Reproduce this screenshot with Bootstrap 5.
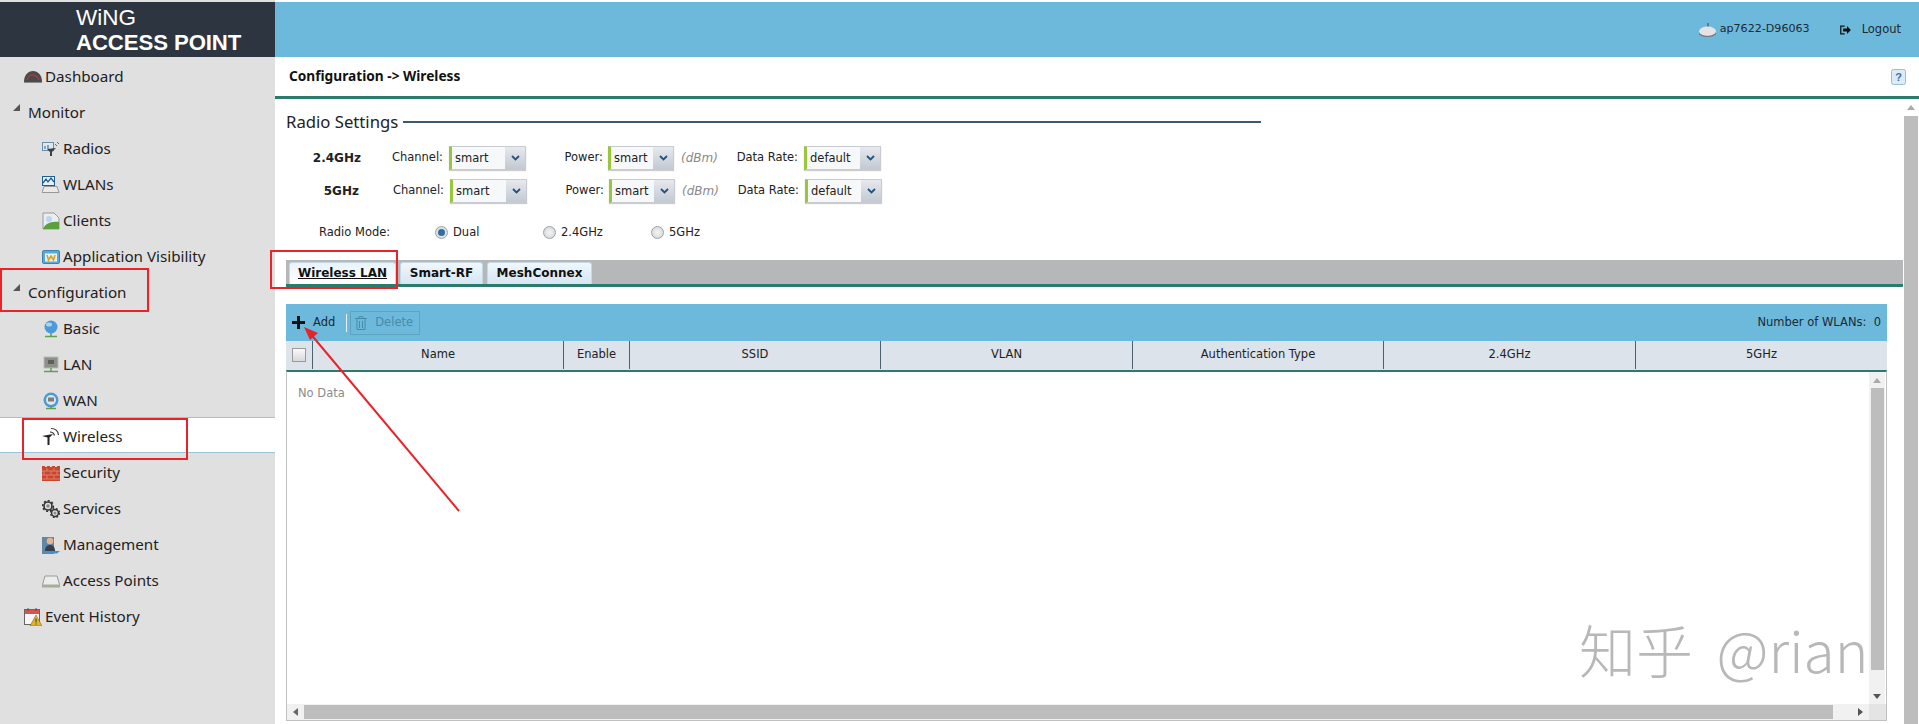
<!DOCTYPE html>
<html lang="en">
<head>
<meta charset="utf-8">
<title>WiNG Access Point</title>
<link href="https://cdn.jsdelivr.net/npm/bootstrap@5.3.0/dist/css/bootstrap.min.css" rel="stylesheet">
<style>
html,body{height:724px;overflow:hidden;background:#fff}
body{font-family:"DejaVu Sans",sans-serif;font-size:11.5px;color:#222;position:relative}
.shell{height:724px}
.side-pane{width:275px;flex:none;background:#e0e0e0;font-family:"Noto Sans",sans-serif;font-size:15.2px;color:#222}
.brand-box{height:55px;margin-top:2px;background:#2d3541;color:#fff;font-family:"Liberation Sans",sans-serif;font-size:22.5px;line-height:25px;padding:3px 0 0 76px}
.brand-box b{display:block;font-size:22.2px;letter-spacing:-.1px}
.tree-row{height:36px;display:flex;align-items:center;padding-left:24px;padding-top:3px;gap:3px}
.tree-row.sub{padding-left:42px}
.tree-row.head{padding-left:28px;position:relative}
.tree-row.head::before{content:"";position:absolute;left:13px;top:11px;border-style:solid;border-width:0 0 7px 7px;border-color:transparent transparent #555 transparent}
.tree-row.on{background:#fff;box-shadow:inset 0 1px 0 #9cc3d6,inset 0 -1px 0 #9cc3d6}
.tree-row svg{flex:none}
.main-pane{min-width:0;flex:1}
.top-strip{height:55px;margin-top:2px;background:#6cb9dc;padding-right:18px;color:#1c2a33}
.ap-name{font-size:11.1px;margin-right:2px}
.crumb-band{height:39px;padding:0 13px 0 14px;font-family:"Noto Sans",sans-serif;font-size:13.7px;font-weight:700;color:#111}
.teal-rule{height:3px;background:#2b7a6b}
.work{position:relative;height:625px;padding:0 0 0 11px}
.sect-title{height:42px;font-family:"Noto Sans",sans-serif;font-size:16.7px;color:#222;width:975px;gap:5px;padding-top:3px}
.sect-title i{display:block;flex:1;height:2px;background:#3b5a70}
.band-row{height:33px}
.band-row.second{margin-left:1px}
.band-row.second .w-band{padding-right:3px}
.w-band{width:75px;text-align:right;font-weight:700;font-size:12px}
.w-ch{width:82px;text-align:right;margin-right:6px}
.w-pw{width:77px;text-align:right;margin-right:5px}
.w-dr{width:81px;text-align:right;margin-right:6px}
.w-db{width:36px;margin-left:7px;font-style:italic;font-size:12px;color:#8a8a8a;white-space:nowrap}
.pick{height:24px;border:1px solid #c8ccd2;border-left:3px solid #9bc53d;background:#f7f8fa;display:flex;align-items:stretch;box-shadow:0 1px 1px #ccc}
.pick span{flex:1;padding-left:3px;line-height:22px}
.pick em{flex:none;width:20px;background:linear-gradient(#e6e9ee,#c3c9d2);display:flex;align-items:center;justify-content:center}
.pick.w77{width:77px}.pick.w66{width:66px}
.mode-row{height:33px;margin-top:9px;padding-left:33px}
.mode-lab{width:116px;white-space:nowrap}
.rad{width:13px;height:13px;border-radius:50%;border:1px solid #9aa3ad;background:radial-gradient(#f4f4f4,#d2d2d2);margin-right:5px;flex:none;display:flex;align-items:center;justify-content:center}
.rad.set::after{content:"";width:7px;height:7px;border-radius:50%;background:#2f6ea5}
.mode-opt{width:108px}
.tab-strip{height:24px;margin-top:11px;background:#b6b7b9;margin-right:16px;padding-left:3px;gap:4px;align-items:flex-end}
.wtab{height:22px;background:linear-gradient(#f0f7fc,#d5e6f3);border:1px solid #c4d8e6;border-bottom:0;border-radius:3px 3px 0 0;font-weight:700;font-size:12px;color:#111;text-align:center;line-height:21px}
.wtab.t1{width:107px;text-decoration:underline;background:linear-gradient(#e9f3fa,#fff)}
.wtab.t2{width:83px}.wtab.t3{width:105px}
.tab-rule{height:3px;background:#2b7a6b;margin-right:16px}
.tool-bar{height:37px;margin-top:17px;width:1601px;background:#6cb9dc;padding:0 6px 0 6px;color:#1c2a33}
.tool-sep{width:1px;height:18px;background:#e4f2f9;margin:0 3px 0 11px}
.del-btn{width:70px;height:24px;border:1px solid #5da3c2;color:#4a8aa8;display:flex;align-items:center;gap:8px;padding-left:4px;background:#6cb9dc}
.grid-head{width:1601px;height:29px;background:#dce3ea;display:grid;grid-template-columns:27px 251px 66px 251px 252px 251px 252px 251px;color:#222}
.grid-head>div{display:flex;align-items:center;justify-content:center;border-right:1px solid #4e6272;height:28px}
.grid-head>div:last-child{border-right:0}
.chk{width:14px;height:14px;border:1px solid #9a9a9a;background:linear-gradient(#fafafa,#d8d8d8)}
.grid-body{width:1601px;height:351px;border:1px solid #c0c0c0;border-top:2px solid #2b7a6b;position:relative;color:#8b8b8b;padding:13px 0 0 11px}
.sb-v,.sb-h{position:absolute;background:#f1f1f1}
.sb-v{top:0;right:1px;width:16px;bottom:16px}
.sb-h{left:0;right:1px;height:16px;bottom:0}
.sb-thumb{position:absolute;background:#bdbdbd}
.sb-v .sb-thumb{left:2px;right:1px;top:16px;bottom:34px}
.sb-h .sb-thumb{left:17px;right:52px;top:1px;bottom:1px}
.sb-tri{position:absolute;width:0;height:0;border-style:solid}
.sb-corner{position:absolute;right:0;bottom:0;width:17px;height:16px;background:#e4e4e4}
.outer-sb{position:absolute;right:1px;top:0;bottom:0;width:14px;background:#fff}
.outer-sb u{position:absolute;display:block;left:0;right:0;top:17px;bottom:0;background:#bdbdbd}
.wm-text{position:absolute;left:1579px;top:610px;white-space:nowrap;font-family:"Noto Sans CJK SC","Noto Sans",sans-serif;font-weight:300;font-size:57px;line-height:76px;word-spacing:11px;color:#b8b8b8}
.annot{position:absolute;left:0;top:0;pointer-events:none}
</style>
</head>
<body>
<div class="shell d-flex">
  <aside class="side-pane">
    <div class="brand-box">WiNG<b>ACCESS POINT</b></div>
    <div class="tree-row"><svg width="18" height="13" viewBox="0 0 18 13"><path d="M0 12C0 5 4 1 9 1s9 4 9 11z" fill="#4a4a4a"/><path d="M3 10c1-4 4-6 7-5 2 .6 4 2 5 5" fill="none" stroke="#a33c3c" stroke-width="1.4"/><path d="M0 12h18v1H0z" fill="#8c8c8c"/></svg>Dashboard</div>
    <div class="tree-row head">Monitor</div>
    <div class="tree-row sub"><svg width="18" height="16" viewBox="0 0 18 16"><rect x=".5" y="1.500" width="11" height="8" fill="#dfe8ee" stroke="#6b8da5"/><path d="M3 8V5M6 8V4" stroke="#3c78a8" stroke-width="1.200"/><path d="M5 8l9-1-4 4v4H8v-4z" fill="#3f3f3f"/><path d="M13 3l2 2M15 1l2 2" stroke="#666" fill="none"/></svg>Radios</div>
    <div class="tree-row sub"><svg width="18" height="17" viewBox="0 0 18 17"><rect x=".5" y=".5" width="12" height="9" fill="#e8f0f6" stroke="#1f5e96"/><path d="M1 7l3-4 2 3 3-4 3 4" fill="none" stroke="#1f5e96" stroke-width="1.300"/><path d="M2 10.500h13l2 6H0z" fill="#e9e9e9" stroke="#999"/></svg>WLANs</div>
    <div class="tree-row sub"><svg width="18" height="18" viewBox="0 0 18 18"><path d="M1 1h11l5 5v11H1z" fill="#e8eef3" stroke="#9a9a9a"/><circle cx="7" cy="7" r="3" fill="#bcd6ea"/><path d="M1 17c2-5 7-8 16-7v7z" fill="#5aa03c"/></svg>Clients</div>
    <div class="tree-row sub"><svg width="18" height="14" viewBox="0 0 18 14"><rect x=".5" y=".5" width="17" height="13" rx="1.500" fill="#59a9d9" stroke="#3b84b5"/><rect x="3" y="3.500" width="12" height="8" fill="#e9f3f9"/><path d="M5 5l1.500 5L9 6l2.500 4L13 5" fill="none" stroke="#d7a21f" stroke-width="1.600"/></svg>Application Visibility</div>
    <div class="tree-row head">Configuration</div>
    <div class="tree-row sub"><svg width="18" height="18" viewBox="0 0 18 18"><circle cx="9" cy="7" r="6.500" fill="#4a9bd8"/><ellipse cx="7" cy="4.500" rx="3" ry="2" fill="#aad6f2"/><path d="M9 13v3M3 16.500h12" stroke="#5f9e53" stroke-width="1.500"/></svg>Basic</div>
    <div class="tree-row sub"><svg width="18" height="18" viewBox="0 0 18 18"><rect x="2" y="1" width="14" height="11" fill="#8d9088" stroke="#bbb"/><rect x="6" y="4" width="6" height="4" fill="#5d6058"/><path d="M9 12v3M2 15.500h14" stroke="#5f9e53" stroke-width="1.500"/></svg>LAN</div>
    <div class="tree-row sub"><svg width="18" height="18" viewBox="0 0 18 18"><circle cx="9" cy="8" r="7.500" fill="#4a9bd8"/><circle cx="9" cy="8" r="5" fill="#dfe8ee"/><rect x="6" y="5.500" width="6" height="4" fill="#7d7f76"/><path d="M9 13v3M4 16.500h10" stroke="#5f9e53" stroke-width="1.500"/></svg>WAN</div>
    <div class="tree-row sub on"><svg width="18" height="19" viewBox="0 0 18 19"><path d="M0 9l11-2-3.500 3.500V18h-2v-7.500z" fill="#222"/><path d="M8 5c2.500 0 4 1.300 4.500 3.500M9 1.500c4 0 7 2.500 7.500 6.500" fill="none" stroke="#333" stroke-width="1.200"/></svg>Wireless</div>
    <div class="tree-row sub"><svg width="18" height="16" viewBox="0 0 18 16"><rect x="0" y="2" width="18" height="14" fill="#c9452f"/><path d="M0 1h3v2H0zM5 1h3v2H5zM10 1h3v2h-3zM15 1h3v2h-3z" fill="#c9452f"/><path d="M0 6h18M0 10h18M0 14h18M5 3v3M12 3v3M2 6v4M9 6v4M15 6v4M5 10v4M12 10v4" stroke="#e28f75" stroke-width=".8"/></svg>Security</div>
    <div class="tree-row sub"><svg width="18" height="18" viewBox="0 0 18 18"><circle cx="6" cy="6" r="4" fill="none" stroke="#333" stroke-width="1.600"/><circle cx="6" cy="6" r="5.300" fill="none" stroke="#333" stroke-width="1.600" stroke-dasharray="2 2"/><circle cx="6" cy="6" r="1.800" fill="#888"/><circle cx="13" cy="13" r="3.400" fill="none" stroke="#333" stroke-width="1.500"/><circle cx="13" cy="13" r="4.500" fill="none" stroke="#333" stroke-width="1.400" stroke-dasharray="1.800 1.800"/><circle cx="13" cy="13" r="1.500" fill="#888"/></svg>Services</div>
    <div class="tree-row sub"><svg width="18" height="18" viewBox="0 0 18 18"><path d="M0 1h12v17H0z" fill="#5f87a8"/><circle cx="8" cy="5" r="3.300" fill="#e8b48e"/><path d="M3 15c0-4 2-6 5-6s5 2 5 6z" fill="#3a3f4a"/><path d="M3 15h15l-3 2.500H3z" fill="#3d93d1"/></svg>Management</div>
    <div class="tree-row sub"><svg width="18" height="14" viewBox="0 0 18 14"><path d="M3 2h12l3 10H0z" fill="#ececec" stroke="#999"/><path d="M0 10.500h18v3H0z" fill="#a5ad9b"/></svg>Access Points</div>
    <div class="tree-row"><svg width="18" height="18" viewBox="0 0 18 18"><rect x=".5" y="1.500" width="15" height="15" fill="#f7f7f7" stroke="#666"/><rect x="1" y="2" width="14" height="4" fill="#d9534f"/><path d="M4 0v3M12 0v3" stroke="#555"/><path d="M12 7l6 11H6z" fill="#e2b32c" stroke="#8a6d10" stroke-width=".6"/><path d="M12 10.500v4M12 15.500v1" stroke="#333"/></svg>Event History</div>
  </aside>
  <main class="main-pane">
    <div class="top-strip d-flex align-items-center justify-content-end">
      <svg class="me-1" width="17" height="14" viewBox="0 0 17 14"><path d="M9 0v6" stroke="#444"/><ellipse cx="8.500" cy="8.500" rx="8.500" ry="5" fill="#e4e4e4"/><path d="M0 9c2 5 15 5 17 0v2c-2 4-15 4-17 0z" fill="#777"/></svg>
      <span class="ap-name">ap7622-D96063</span>
      <svg class="ms-4 me-2 ps-1" width="18" height="12" viewBox="0 0 18 12"><path d="M6 1H1v10h5" fill="none" stroke="#111" stroke-width="1.600"/><path d="M4 4h5V1l5 5-5 5V8H4z" fill="#111"/></svg>
      <span>Logout</span>
    </div>
    <div class="crumb-band d-flex align-items-center justify-content-between">
      <span>Configuration -&gt; Wireless</span>
      <svg width="15" height="16" viewBox="0 0 15 16"><rect x=".5" y=".5" width="14" height="15" rx="2" fill="#dcebf8" stroke="#9dbbd4"/><text x="7.500" y="12" text-anchor="middle" font-family="Liberation Sans,sans-serif" font-size="11" font-weight="700" fill="#3f6f9e">?</text></svg>
    </div>
    <div class="teal-rule"></div>
    <div class="work">
      <div class="sect-title d-flex align-items-center"><span>Radio Settings</span><i></i></div>
      <div class="band-row d-flex align-items-center">
        <div class="w-band">2.4GHz</div><div class="w-ch">Channel:</div>
        <div class="pick w77"><span>smart</span><em><svg width="9" height="6" viewBox="0 0 9 6"><path d="M1 1l3.500 3.500L8 1" fill="none" stroke="#24527d" stroke-width="1.800"/></svg></em></div>
        <div class="w-pw">Power:</div>
        <div class="pick w66"><span>smart</span><em><svg width="9" height="6" viewBox="0 0 9 6"><path d="M1 1l3.500 3.500L8 1" fill="none" stroke="#24527d" stroke-width="1.800"/></svg></em></div>
        <div class="w-db">(dBm)</div><div class="w-dr">Data Rate:</div>
        <div class="pick w77"><span>default</span><em><svg width="9" height="6" viewBox="0 0 9 6"><path d="M1 1l3.500 3.500L8 1" fill="none" stroke="#24527d" stroke-width="1.800"/></svg></em></div>
      </div>
      <div class="band-row second d-flex align-items-center">
        <div class="w-band">5GHz</div><div class="w-ch">Channel:</div>
        <div class="pick w77"><span>smart</span><em><svg width="9" height="6" viewBox="0 0 9 6"><path d="M1 1l3.500 3.500L8 1" fill="none" stroke="#24527d" stroke-width="1.800"/></svg></em></div>
        <div class="w-pw">Power:</div>
        <div class="pick w66"><span>smart</span><em><svg width="9" height="6" viewBox="0 0 9 6"><path d="M1 1l3.500 3.500L8 1" fill="none" stroke="#24527d" stroke-width="1.800"/></svg></em></div>
        <div class="w-db">(dBm)</div><div class="w-dr">Data Rate:</div>
        <div class="pick w77"><span>default</span><em><svg width="9" height="6" viewBox="0 0 9 6"><path d="M1 1l3.500 3.500L8 1" fill="none" stroke="#24527d" stroke-width="1.800"/></svg></em></div>
      </div>
      <div class="mode-row d-flex align-items-center">
        <div class="mode-lab">Radio Mode:</div>
        <div class="mode-opt d-flex align-items-center"><span class="rad set"></span>Dual</div>
        <div class="mode-opt d-flex align-items-center"><span class="rad"></span>2.4GHz</div>
        <div class="mode-opt d-flex align-items-center"><span class="rad"></span>5GHz</div>
      </div>
      <div class="tab-strip d-flex">
        <div class="wtab t1">Wireless LAN</div><div class="wtab t2">Smart-RF</div><div class="wtab t3">MeshConnex</div>
      </div>
      <div class="tab-rule"></div>
      <div class="tool-bar d-flex align-items-center">
        <svg class="me-2" width="13" height="13" viewBox="0 0 13 13"><path d="M5 0h3v5h5v3H8v5H5V8H0V5h5z" fill="#111"/></svg>
        <span>Add</span><span class="tool-sep"></span>
        <div class="del-btn"><svg width="12" height="14" viewBox="0 0 12 14"><path d="M0 2.500h12M4 2V.7h4V2M2 3v10.500h8V3M4.500 5v7M7.500 5v7" fill="none" stroke="#4a8aa8"/></svg>Delete</div>
        <span class="ms-auto">Number of WLANs:&nbsp; 0</span>
      </div>
      <div class="grid-head">
        <div><span class="chk"></span></div><div>Name</div><div>Enable</div><div>SSID</div><div>VLAN</div><div>Authentication Type</div><div>2.4GHz</div><div>5GHz</div>
      </div>
      <div class="grid-body">No Data
        <div class="sb-v"><div class="sb-thumb"></div><span class="sb-tri" style="left:4px;top:6px;border-width:0 4px 5px 4px;border-color:transparent transparent #aaa transparent"></span><span class="sb-tri" style="left:4px;bottom:5px;border-width:5px 4px 0 4px;border-color:#555 transparent transparent transparent"></span></div>
        <div class="sb-h"><div class="sb-thumb"></div><span class="sb-tri" style="left:6px;top:4px;border-width:4px 5px 4px 0;border-color:transparent #666 transparent transparent"></span><span class="sb-tri" style="right:22px;top:4px;border-width:4px 0 4px 5px;border-color:transparent transparent transparent #555"></span></div>
        <div class="sb-corner"></div>
      </div>
      <div class="outer-sb"><u></u><span class="sb-tri" style="left:3px;top:6px;border-width:0 4px 5px 4px;border-color:transparent transparent #aaa transparent"></span></div>
    </div>
  </main>
</div>
<div class="wm-text">知乎 @rian</div>
<svg class="annot" width="1919" height="724" viewBox="0 0 1919 724">
  <g fill="none" stroke="#e8232a" stroke-width="2">
    <rect x="1" y="269" width="147" height="42"/>
    <rect x="23" y="419" width="164" height="40"/>
    <rect x="271" y="251" width="126" height="37"/>
    <path d="M459 511L309 332"/>
  </g>
  <path d="M304 327l14 6-8 7z" fill="#e8232a"/>
</svg>
</body>
</html>
